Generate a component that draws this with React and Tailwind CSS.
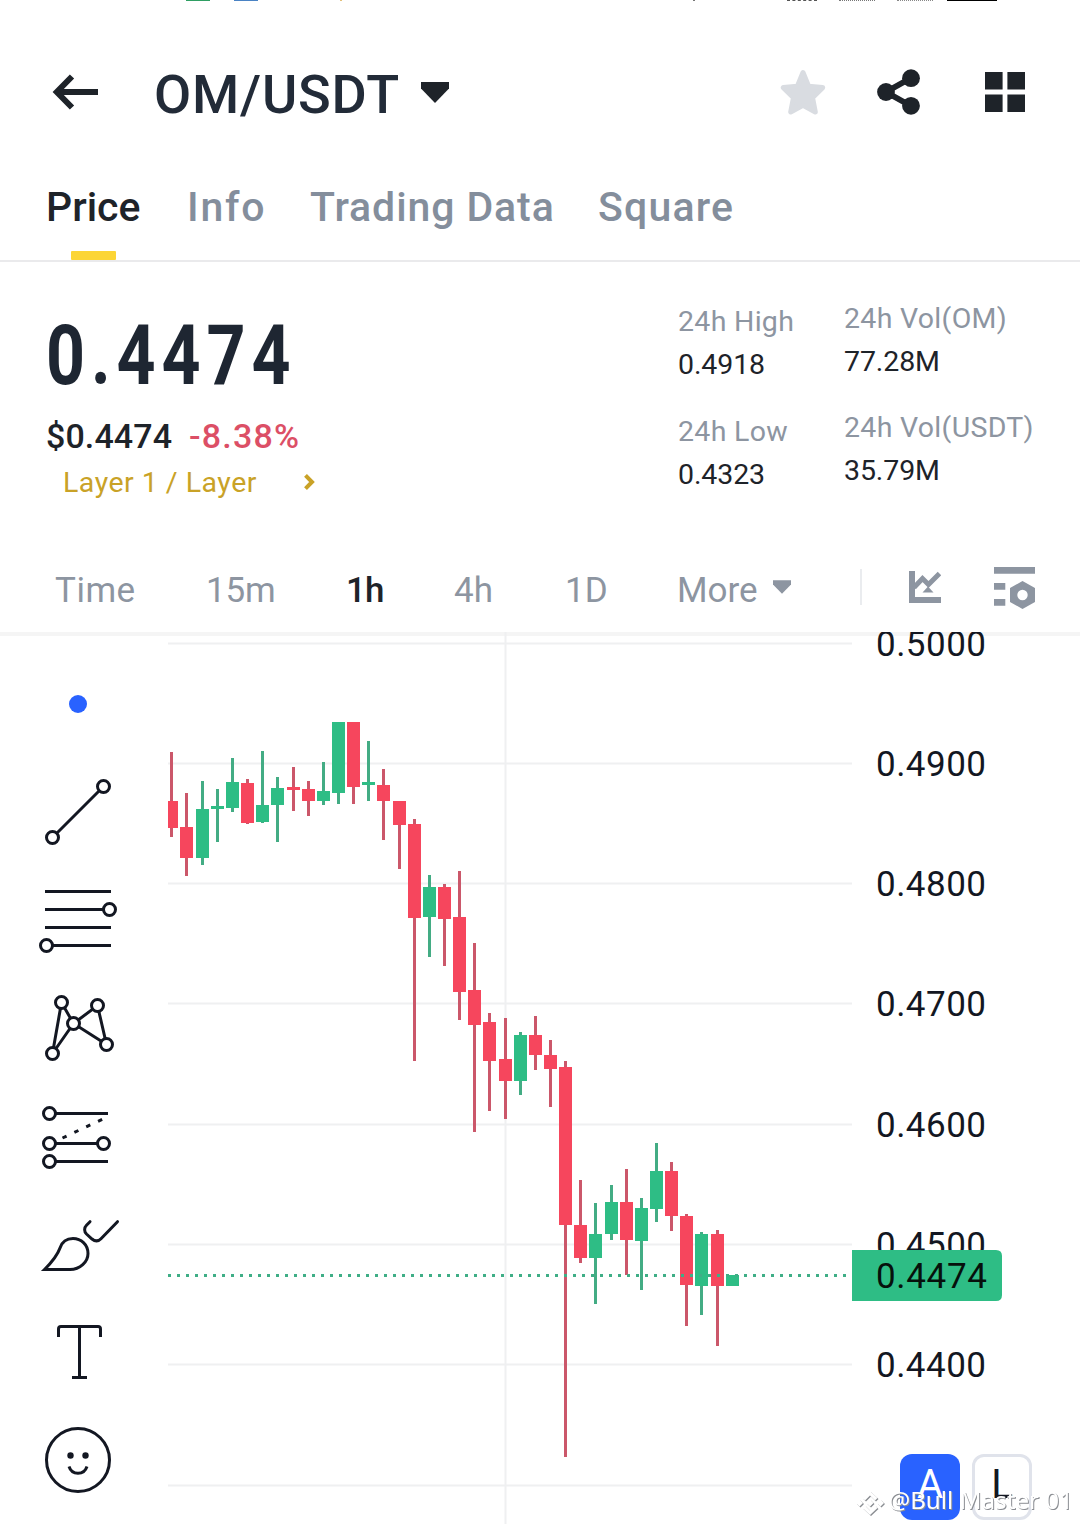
import { useState } from 'react';
import clsx from 'clsx';

const UP = { body: '#2ebd85', wick: '#43ac84' };
const DOWN = { body: '#f6465d', wick: '#cb576a' };

// [x, direction, high, bodyTop, bodyBottom, low] in plot pixels
const candles = [
  [-3, 'd', 120, 169, 196, 205],
  [12, 'd', 161, 195, 226, 244],
  [28, 'u', 149, 177, 226, 233],
  [43, 'u', 157, 174, 177, 210],
  [58, 'u', 126, 150, 176, 180],
  [73, 'd', 147, 151, 191, 192],
  [88, 'u', 119, 173, 190, 191],
  [103, 'u', 145, 156, 173, 210],
  [119, 'd', 135, 155, 158, 179],
  [134, 'd', 149, 157, 169, 184],
  [149, 'u', 130, 159, 169, 173],
  [164, 'u', 90, 90, 161, 172],
  [179, 'd', 90, 90, 155, 172],
  [194, 'u', 109, 150, 153, 169],
  [209, 'd', 137, 153, 169, 208],
  [225, 'd', 169, 169, 193, 237],
  [240, 'd', 187, 192, 286, 429],
  [255, 'u', 243, 255, 285, 325],
  [270, 'd', 252, 255, 287, 334],
  [285, 'd', 239, 285, 360, 388],
  [300, 'd', 311, 358, 393, 500],
  [315, 'd', 381, 390, 429, 479],
  [331, 'd', 386, 427, 449, 487],
  [346, 'u', 400, 403, 449, 463],
  [361, 'd', 384, 403, 423, 438],
  [376, 'd', 408, 423, 437, 475],
  [391, 'd', 429, 435, 593, 825],
  [406, 'd', 548, 593, 626, 631],
  [421, 'u', 571, 602, 626, 672],
  [437, 'u', 553, 570, 602, 608],
  [452, 'd', 537, 570, 608, 643],
  [467, 'u', 566, 576, 609, 658],
  [482, 'u', 511, 539, 577, 590],
  [497, 'd', 530, 539, 584, 599],
  [512, 'd', 582, 584, 653, 694],
  [527, 'u', 600, 602, 654, 683],
  [543, 'd', 598, 602, 654, 714],
  [558, 'u', 643, 643, 654, 654],
];

const levels = [
  { y: 11, label: '0.5000' },
  { y: 131, label: '0.4900' },
  { y: 251, label: '0.4800' },
  { y: 371, label: '0.4700' },
  { y: 492, label: '0.4600' },
  { y: 612, label: '0.4500' },
  { y: 732, label: '0.4400' },
  { y: 853, label: '' },
];

const tabs = [
  { name: 'Price', className: 'w-[141px]' },
  { name: 'Info', className: 'w-[123px] tracking-[1.8px]' },
  { name: 'Trading Data', className: 'w-[288px] tracking-[0.9px]' },
  { name: 'Square', className: 'tracking-[1.2px]' },
];

const intervals = [
  { name: 'Time', className: 'w-[151px] tracking-[0.5px]' },
  { name: '15m', className: 'w-[140px] tracking-[-0.2px]' },
  { name: '1h', className: 'w-[108px] tracking-[-0.8px]' },
  { name: '4h', className: 'w-[111px]' },
  { name: '1D', className: 'w-[112px]' },
];

const statColumns = [
  {
    className: 'w-[166px] pt-[38px] leading-[43px]',
    items: [
      ['24h High', '0.4918'],
      ['24h Low', '0.4323'],
    ],
  },
  {
    className: 'pt-[36px] leading-[42.5px]',
    items: [
      ['24h Vol(OM)', '77.28M'],
      ['24h Vol(USDT)', '35.79M'],
    ],
  },
];

const StatusBar = () => (
  <div className="flex h-10 items-start">
    <span className="ml-[186px] h-px w-6 bg-[#2f9e63]" />
    <span className="ml-6 h-px w-6 bg-[#4a83c4]" />
    <span className="ml-[82px] h-px w-0.5 bg-[#e3c07a]" />
    <span className="ml-[351px] h-px w-0.5 bg-[#777777]" />
    <span className="ml-[92px] w-[30px] border-t border-dashed border-[#555555]" />
    <span className="ml-[22px] w-[36px] border-t border-dotted border-[#777777]" />
    <span className="ml-[22px] w-[36px] border-t border-dotted border-[#888888]" />
    <span className="ml-[14px] h-px w-[50px] bg-black" />
  </div>
);

const Caret = ({ className }) => (
  <svg viewBox="0 0 28 21" className={className} fill="currentColor">
    <path d="M0 0h28v6.5L14 21 0 6.5z" />
  </svg>
);

const Header = () => (
  <header className="flex h-[104px] items-center text-[#1e2329]">
    <svg viewBox="0 0 46 36" className="ml-[52px] h-9 w-[46px]" fill="none" stroke="currentColor" strokeWidth="6">
      <path d="M46 18H6M20 2.5L4.8 18 20 33.5" />
    </svg>
    <h1 className="ml-[56px] w-[247px] pt-[6px] font-medium text-[54px] leading-[64px] tracking-[0.8px] text-[#222b38]">
      OM/USDT
    </h1>
    <Caret className="ml-5 h-[21px] w-7" />
    <svg viewBox="0 0 46 46" className="ml-[331px] h-[46px] w-[46px] text-[#d9dce1]" fill="currentColor" stroke="currentColor" strokeWidth="5" strokeLinejoin="round">
      <path d="M23 3.5l5.6 13.8L42.7 18.6 32.5 28.6 35.3 43 23 36.3 10.7 43 13.5 28.6 3.3 18.6 17.4 17.3z" />
    </svg>
    <svg viewBox="0 0 44 46" className="ml-[51px] h-[46px] w-11" fill="currentColor">
      <path d="M34 9L9 23l25 14" fill="none" stroke="currentColor" strokeWidth="6" />
      <circle cx="9" cy="23" r="8.9" />
      <circle cx="34" cy="9.2" r="8.9" />
      <circle cx="34" cy="36.8" r="8.9" />
    </svg>
    <svg viewBox="0 0 40 40" className="ml-16 h-10 w-10" fill="currentColor">
      <path d="M0 0h17.6v17.6H0zM22.4 0H40v17.6H22.4zM0 22.4h17.6V40H0zM22.4 22.4H40V40H22.4z" />
    </svg>
  </header>
);

const Tabs = () => {
  const [active, setActive] = useState('Price');

  return (
    <nav className="flex h-[118px] border-b-2 border-[#eaeaec] pt-[38px] pl-[46px]">
      {tabs.map((tab) => (
        <div key={tab.name} className={clsx('flex items-start text-[41px] leading-[50px] font-medium', tab.className)}>
          <button
            onClick={() => setActive(tab.name)}
            className={clsx(
              'flex flex-col items-center whitespace-nowrap',
              active === tab.name ? 'text-[#1e2329]' : 'text-[#848e9c]'
            )}
          >
            {tab.name}
            {active === tab.name && <span className="mt-[19px] h-[9px] w-[45px] rounded-[1px] bg-[#fcd535]" />}
          </button>
        </div>
      ))}
    </nav>
  );
};

const Summary = () => (
  <section className="flex h-[283px]">
    <div className="w-[678px] pt-11 pl-[46px]">
      <div className="origin-left scale-x-[0.82] text-[83px] leading-[100px] font-bold tracking-[7.2px] text-[#1e2632]">
        0.4474
      </div>
      <div className="mt-2 flex gap-[17px] text-[34px] leading-[44px] font-medium">
        <span className="tracking-[0.1px] text-[#1e2329]">$0.4474</span>
        <span className="tracking-[1.2px] text-[#dc4f66]">-8.38%</span>
      </div>
      <div className="mt-[5px] flex items-center pl-[17px] text-[#c9a227]">
        <span className="w-[241px] text-[28.5px] leading-[40px] tracking-[0.5px]">Layer 1 / Layer</span>
        <svg viewBox="0 0 11 16" className="mb-0.5 h-4 w-[11px]" fill="none" stroke="currentColor" strokeWidth="4">
          <path d="M1.5 1.4L8 8l-6.5 6.6" />
        </svg>
      </div>
    </div>
    {statColumns.map((col) => (
      <div key={col.items[0][0]} className={clsx('flex flex-col gap-6 text-[28.5px] whitespace-nowrap', col.className)}>
        {col.items.map(([label, value]) => (
          <div key={label}>
            <div className="tracking-[0.3px] text-[#8d95a1]">{label}</div>
            <div className="tracking-[-0.1px] text-[#1e2329]">{value}</div>
          </div>
        ))}
      </div>
    ))}
  </section>
);

const IntervalBar = () => {
  const [active, setActive] = useState('1h');

  return (
    <div className="flex h-[87px] items-center pl-[55px] text-[35px] leading-[44px] text-[#8d95a1]">
      {intervals.map((item) => (
        <button
          key={item.name}
          onClick={() => setActive(item.name)}
          className={clsx('pt-[5px] text-left', item.className, active === item.name && 'font-medium text-[#1e2329]')}
        >
          {item.name}
        </button>
      ))}
      <span className="w-[96px] pt-[5px]">More</span>
      <Caret className="mb-[3px] h-[14px] w-[18px]" />
      <span className="mb-[3px] ml-[69px] h-9 w-[2px] bg-[#eaecef]" />
      <svg viewBox="0 0 32 32" className="mb-[3px] ml-[47px] h-8 w-8" fill="none" stroke="currentColor">
        <path d="M3 0v29h29" strokeWidth="6" />
        <path d="M5 16.500l8.500-9 6 6L30.500 2.500" strokeWidth="5" />
        <path d="M13.500 21.500l5.500-6 5.500 6z" fill="currentColor" stroke="none" />
      </svg>
      <svg viewBox="0 0 41 42" className="mb-px ml-[53px] h-[42px] w-[41px]" fill="currentColor">
        <path d="M0 0h41v6.7H0zM0 16h11.300v6.700H0zM0 32h11.300v6.700H0z" />
        <path fillRule="evenodd" d="M28.500 14L41 21v14l-12.500 7L16 35V21zM28.500 22.800a5.200 5.200 0 1 0 0 10.400 5.200 5.200 0 0 0 0-10.400z" />
      </svg>
    </div>
  );
};

const Tool = ({ children }) => (
  <svg viewBox="0 0 84 108" className="h-[108px] w-[84px]" fill="none" stroke="#131722" strokeWidth="3">
    {children}
  </svg>
);

const Node = ({ x, y }) => <circle cx={x} cy={y} r="6" fill="#fff" />;

const DrawingTools = () => (
  <aside className="flex w-[168px] flex-col pt-[18px] pl-9">
    <Tool>
      <circle cx="42" cy="54" r="9" fill="#2962ff" stroke="none" />
    </Tool>
    <Tool>
      <path d="M16.5 79.5l51-51" />
      <Node x="16.5" y="79.5" />
      <Node x="67.5" y="28.5" />
    </Tool>
    <Tool>
      <path d="M9 25.5h66M9 43.5h66M9 61.5h66M9 79.5h66" />
      <Node x="73.5" y="43.5" />
      <Node x="10.5" y="79.5" />
    </Tool>
    <Tool>
      <path d="M16.5 79.5l9-51 12 21zM37.5 49.5l24-18 9 39z" />
      <Node x="25.5" y="28.5" />
      <Node x="61.5" y="31.5" />
      <Node x="37.5" y="49.5" />
      <Node x="16.5" y="79.5" />
      <Node x="70.5" y="70.5" />
    </Tool>
    <Tool>
      <path d="M13.5 31.5H72M13.5 61.5h54M13.5 79.5H72" />
      <path d="M26.5 56L68 36.5" strokeDasharray="4.5 8.6" />
      <Node x="13.5" y="31.5" />
      <Node x="13.5" y="61.5" />
      <Node x="67.5" y="61.5" />
      <Node x="13.5" y="79.5" />
    </Tool>
    <Tool>
      <path d="M8.500 79.500h25.500c10 0 18-7.500 18-16 0-9-7-15-15-15-7 0-11 3.500-13 9.500C21 66.500 16 72 8.500 79.500z" />
      <path d="M54 31.700L50.500 35.300c-2.500 2.500-2.500 6.200 0 8.700l5.500 5c3 2.500 6.300 2.500 9-.3L81.500 31.700" strokeLinecap="round" />
    </Tool>
    <Tool>
      <path d="M22.500 39v-8q0-2.500 2.500-2.500h37q2.500 0 2.500 2.500v8M43.500 28.500v51M36 79.500h15" />
    </Tool>
    <Tool>
      <circle cx="42" cy="54" r="31.500" />
      <circle cx="34.500" cy="49.500" r="3.200" fill="#131722" stroke="none" />
      <circle cx="49.500" cy="49.500" r="3.200" fill="#131722" stroke="none" />
      <path d="M33 60.500c1.500 4.500 5 6.800 9 6.800s7.500-2.300 9-6.800" />
    </Tool>
  </aside>
);

const PriceChart = () => (
  <svg viewBox="0 0 912 892" className="h-[892px] w-[912px]">
    <g fill="#eff0f1">
      {levels.map((level) => (
        <rect key={level.y} x="0" y={level.y - 0.5} width="684" height="2" />
      ))}
      <rect x="336.500" y="0" width="2" height="892" />
    </g>
    {candles.map(([x, dir, high, top, bottom, low]) => {
      const color = dir === 'u' ? UP : DOWN;
      return (
        <g key={x}>
          <rect x={Math.max(x + 5, 2)} y={high} width="3" height={low - high} fill={color.wick} />
          <rect x={Math.max(x, 0)} y={top} width={x < 0 ? 10 : 13} height={bottom - top} fill={color.body} />
        </g>
      );
    })}
    <path d="M0 643.500h684" stroke="#3fae86" strokeWidth="3" strokeDasharray="3 6" />
    <g fill="#131722" fontSize="35">
      {levels.map((level) => (
        <text key={level.y} x="708" y={level.y + 12.500} textLength={level.label ? 110 : undefined}>
          {level.label}
        </text>
      ))}
    </g>
    <path d="M684 618h144q6 0 6 6v39q0 6-6 6H684z" fill="#2ebd85" />
    <text x="708" y="656" fontSize="35" textLength="111" fill="#06110c">
      0.4474
    </text>
  </svg>
);

const Watermark = () => (
  <div className="absolute right-[7px] bottom-[7px] flex items-center gap-1 text-white [filter:drop-shadow(1px_1px_0.500px_#8a8d92)]">
    <svg viewBox="0 0 28 24" className="mt-[5px] h-6 w-7" fill="currentColor">
      <path d="M14 0l7.500 7-2.500 2.500-5-5-5 5L6.500 7zM14 24l7.500-7-2.500-2.500-5 5-5-5L6.500 17zM14 8.500l3.500 3.500-3.500 3.500-3.500-3.500zM3.500 8.500L7 12l-3.500 3.500L0 12zM24.500 8.500L28 12l-3.500 3.500L21 12z" />
    </svg>
    <span className="font-['Noto_Sans',sans-serif] text-[24.2px] leading-[34px] whitespace-nowrap">@Bull Master 01</span>
  </div>
);

export default function App() {
  return (
    <div className="relative h-[1524px] w-[1080px] overflow-hidden bg-white font-['Roboto',sans-serif]">
      <StatusBar />
      <Header />
      <Tabs />
      <Summary />
      <IntervalBar />
      <main className="relative flex h-[892px] shadow-[inset_0_4px_#f5f5f5]">
        <DrawingTools />
        <PriceChart />
        {/* Auto / log scale toggles float over the price axis */}
        <div className="absolute right-12 bottom-1 flex gap-3 text-[40px] leading-[56px]">
          <button className="h-[66px] w-[60px] rounded-xl bg-[#2962ff] pb-1 text-white">A</button>
          <button className="h-[66px] w-[60px] rounded-xl border-[3px] border-[#e0e3eb] bg-white pb-1 text-[#131722]">L</button>
        </div>
      </main>
      <Watermark />
    </div>
  );
}
